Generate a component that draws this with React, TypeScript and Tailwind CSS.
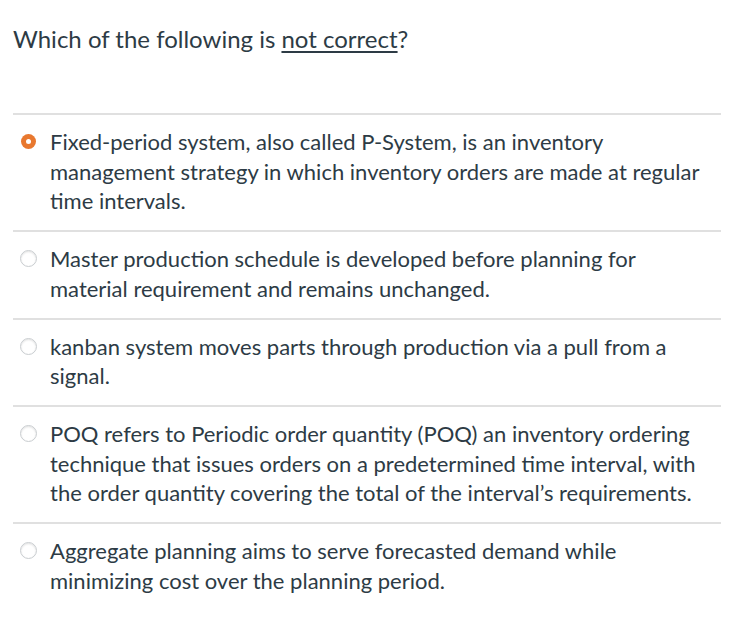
const options = [
  'Fixed-period system, also called P-System, is an inventory management strategy in which inventory orders are made at regular time intervals.',
  'Master production schedule is developed before planning for material requirement and remains unchanged.',
  'kanban system moves parts through production via a pull from a signal.',
  'POQ refers to Periodic order quantity (POQ) an inventory ordering technique that issues orders on a predetermined time interval, with the order quantity covering the total of the interval\u2019s requirements.',
  'Aggregate planning aims to serve forecasted demand while minimizing cost over the planning period.',
]

function Radio({ checked }: { checked: boolean }) {
  if (checked) {
    return (
      <span className="mt-[7px] ml-[8px] mr-[14px] flex h-[15px] w-[15px] flex-shrink-0 items-center justify-center rounded-full bg-[#e8782f]">
        <span className="h-[5px] w-[5px] rounded-full bg-white" />
      </span>
    )
  }
  return (
    <span className="mt-[6px] ml-[7px] mr-[13px] h-[17px] w-[17px] flex-shrink-0 rounded-full border border-[#c9cdd0] bg-white shadow-[inset_0_1px_2px_rgba(0,0,0,0.12)]" />
  )
}

export default function App() {
  return (
    <div className="min-h-[630px] w-[746px] bg-white pl-[13px] text-[#2d3b45]" style={{ fontFamily: 'Lato, "Noto Sans", sans-serif' }}>
      <div className="w-[708px]">
        <h1 className="pt-[24px] pb-[60px] text-[24px] leading-[29px] font-normal">
          Which of the following is <span className="underline underline-offset-[3px]">not correct</span>?
        </h1>
        {options.map((text, i) => (
          <div key={i} className="flex border-t-2 border-[#e0e0e0] pt-[12px] pb-[14px]">
            <Radio checked={i === 0} />
            <p className="text-[22px] leading-[29.7px] pr-[10px]">{text}</p>
          </div>
        ))}
      </div>
    </div>
  )
}
